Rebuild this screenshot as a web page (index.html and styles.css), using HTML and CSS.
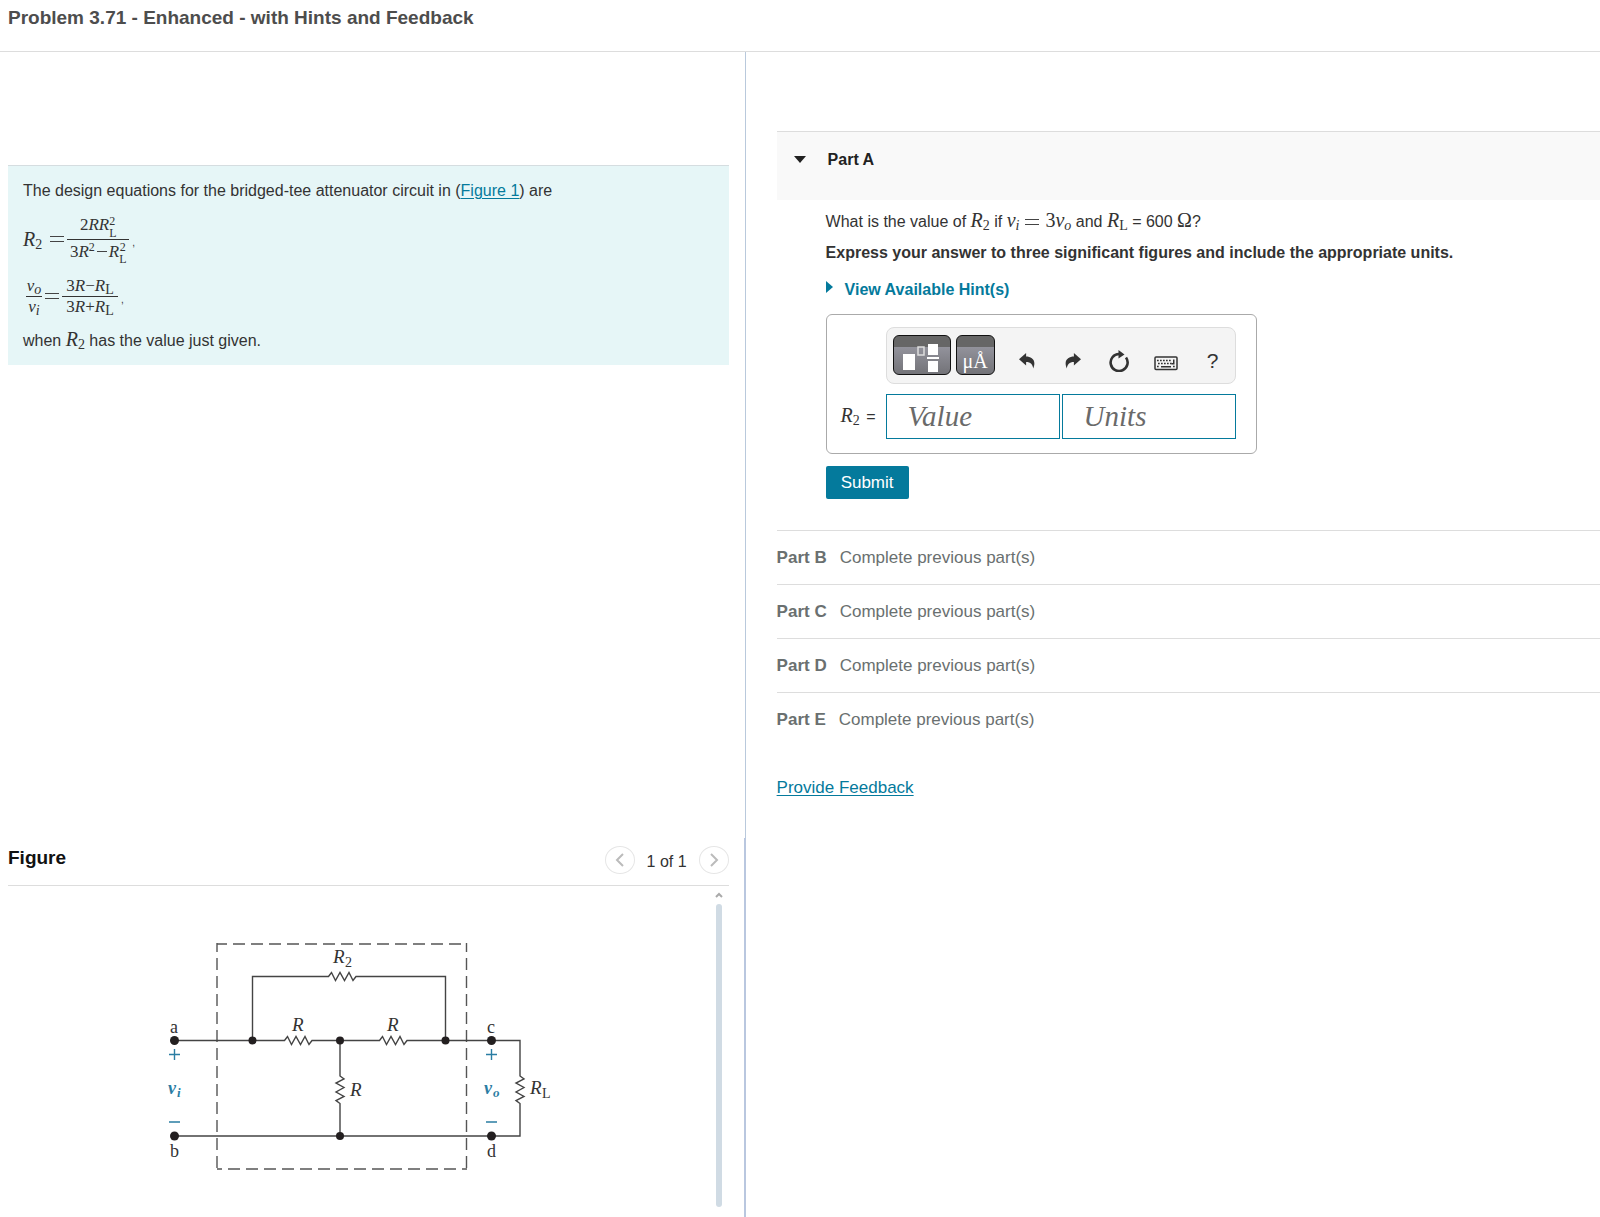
FILE: index.html
```html
<!DOCTYPE html>
<html lang="en">
<head>
<meta charset="utf-8">
<meta name="viewport" content="width=device-width, initial-scale=1">
<title>Problem 3.71</title>
<link rel="stylesheet" href="styles.css">
</head>
<body>
<header class="page-header">
  <h1 class="page-title">Problem 3.71 - Enhanced - with Hints and Feedback</h1>
</header>
<main class="columns">
  <div class="left">
    <section class="problem">
      <div class="problem-box">
        <p class="text">The design equations for the bridged-tee attenuator circuit in (<a href="#figure">Figure 1</a>) are</p>
        <div class="equation">
          <span class="math"><i>R</i><sub>2</sub></span>
          <span class="eq"></span>
          <span class="frac frac-tall">
            <span class="num">2<i>RR</i><span class="stack"><span>2</span><span>L</span></span></span>
            <span class="den">3<i>R</i><sup>2</sup><span class="minus"></span><i>R</i><span class="stack"><span>2</span><span>L</span></span></span>
          </span>
          <span class="comma">,</span>
        </div>
        <div class="equation equation-short">
          <span class="frac frac-small">
            <span class="num"><i>v<sub>o</sub></i></span>
            <span class="den"><i>v<sub>i</sub></i></span>
          </span>
          <span class="eq"></span>
          <span class="frac">
            <span class="num">3<i>R</i>−<i>R</i><sub>L</sub></span>
            <span class="den">3<i>R</i>+<i>R</i><sub>L</sub></span>
          </span>
          <span class="comma">,</span>
        </div>
        <p class="text">when <span class="math"><i>R</i><sub>2</sub></span> has the value just given.</p>
      </div>
    </section>
    <section class="figure" id="figure">
      <div class="figure-head">
        <h2 class="figure-title">Figure</h2>
        <div class="pager">
          <button class="round" type="button" aria-label="Previous figure"><svg width="10" height="14" viewBox="0 0 10 14"><path d="M8 1 2 7l6 6"/></svg></button>
          <span class="pager-text">1 of 1</span>
          <button class="round" type="button" aria-label="Next figure"><svg width="10" height="14" viewBox="0 0 10 14"><path d="m2 1 6 6-6 6"/></svg></button>
        </div>
      </div>
      <div class="figure-body">
        <div class="figure-canvas">
          <svg class="circuit" width="420" height="250" viewBox="148 930 420 250" role="img" aria-label="Bridged-tee attenuator circuit">
            <g class="dashes">
              <path d="M217 944H467" stroke-dasharray="12 6" stroke-dashoffset="2"/>
              <path d="M217 1169H467" stroke-dasharray="12 6" stroke-dashoffset="7"/>
              <path d="M217 943V1169" stroke-dasharray="12 6" stroke-dashoffset="3"/>
              <path d="M466.500 943V1169" stroke-dasharray="12 6" stroke-dashoffset="3"/>
            </g>
            <g class="wires">
              <path d="M252.500 1040V976.500H328.500l3-4 4 8 4.500-8 4.500 8 4.500-8 4 8 3-4H445.500V1040"/>
              <path d="M174 1040.500H284.500l3-4 4 8 4.500-8 4.500 8 4.500-8 4 8 3-4H379.500l3-4 4 8 4.500-8 4.500 8 4.500-8 4 8 3-4H520V1076l4 3-8 4 8 4.500-8 4.500 8 4.500-8 4 4 3V1136H174"/>
              <path d="M340 1040V1076l4 3-8 4 8 4.500-8 4.500 8 4.500-8 4 4 3V1136"/>
            </g>
            <g class="nodes">
              <circle cx="174.500" cy="1040.500" r="4.500"/><circle cx="252.500" cy="1040.500" r="4"/><circle cx="340" cy="1040.500" r="4"/><circle cx="445.500" cy="1040.500" r="4"/><circle cx="491.500" cy="1040.500" r="4.500"/>
              <circle cx="174.500" cy="1136" r="4.500"/><circle cx="340" cy="1136" r="4"/><circle cx="491.500" cy="1136" r="4.500"/>
            </g>
            <g class="signs">
              <path d="M169 1054.500h11M174.500 1049v11M486 1054.500h11M491.500 1049v11M169 1122h11M486 1122h11"/>
            </g>
            <g class="labels">
              <text x="170" y="1033">a</text><text x="170" y="1157">b</text>
              <text x="487" y="1033">c</text><text x="487" y="1157">d</text>
              <text class="it" x="333" y="963">R</text><text class="small" x="345" y="967">2</text>
              <text class="it" x="292" y="1031">R</text><text class="it" x="387" y="1031">R</text>
              <text class="it" x="350" y="1096">R</text>
              <text class="it" x="530" y="1094">R</text><text class="small" x="542" y="1098">L</text>
              <text class="volt" x="168" y="1094">v</text><text class="volt volt-sub" x="177" y="1097">i</text>
              <text class="volt" x="484" y="1094">v</text><text class="volt volt-sub" x="493" y="1097">o</text>
            </g>
          </svg>
        </div>
        <div class="scroll"><svg width="8" height="6" viewBox="0 0 8 6"><path d="M1 5 4 2l3 3"/></svg><span class="thumb"></span></div>
      </div>
    </section>
  </div>
  <div class="right">
    <section class="part-a">
      <div class="part-head">
        <svg width="12" height="7" viewBox="0 0 12 7"><path d="M0 0h12L6 7z"/></svg>
        <h2 class="part-title">Part A</h2>
      </div>
      <div class="part-body">
        <p class="text question">What is the value of <span class="math"><i>R</i><sub>2</sub></span> if <span class="math"><i>v<sub>i</sub></i></span><span class="eq"></span><span class="math">3<i>v<sub>o</sub></i></span> and <span class="math"><i>R</i><sub>L</sub></span> = 600 <span class="math">Ω</span>?</p>
        <p class="text instruction">Express your answer to three significant figures and include the appropriate units.</p>
        <a class="hints" href="#hints"><svg width="7" height="12" viewBox="0 0 7 12"><path d="M0 0l7 6-7 6z"/></svg><span>View Available Hint(s)</span></a>
        <form class="answer">
          <div class="toolbar">
            <button class="tool templates" type="button" aria-label="Templates"><svg width="42" height="32" viewBox="0 0 42 32"><path d="M2 13h12v16H2zM27 3h10v11H27zM27 20h10v11H27zM26 16h12v2H26z" fill="#fff"/><path d="M17 6h6v8h-6z" fill="none" stroke="#ddd" stroke-width="1.500"/></svg></button>
            <button class="tool symbols" type="button" aria-label="Symbols">μÅ</button>
            <button class="plain undo" type="button" aria-label="Undo"><svg width="16" height="18" viewBox="0 0 18 18"><path d="M8 0v4c6 0 12 4 8 13.500C15.500 13 13 10 8 10v4L0 7z"/></svg></button>
            <button class="plain redo" type="button" aria-label="Redo"><svg width="16" height="18" viewBox="0 0 18 18"><path d="M10 0v4c-6 0-12 4-8 13.500C2.500 13 5 10 10 10v4l8-7z"/></svg></button>
            <button class="plain" type="button" aria-label="Reset"><svg width="20" height="22" viewBox="0 0 20 22"><path d="M10 4a8.500 8.500 0 1 0 7 3.500" fill="none" stroke="#333" stroke-width="2.600"/><path d="M9.500 0l6 4.500-6 4z"/></svg></button>
            <button class="plain keyboard" type="button" aria-label="Keyboard shortcuts"><svg width="24" height="15" viewBox="0 0 24 15"><rect x="1" y="1" width="22" height="12.500" rx="1" fill="none" stroke="#333" stroke-width="1.500"/><path d="M3 4.500h15M4 7.500h14M3 10.500h2M19 10.500h2" fill="none" stroke="#333" stroke-width="1.500" stroke-dasharray="1.700 1.300"/><path d="M7 10h10v1.500H7zM19 3.500h1.500V8.500h-3V7h1.500z"/></svg></button>
            <button class="plain help" type="button" aria-label="Help">?</button>
          </div>
          <label class="answer-label" for="value"><span class="math"><i>R</i><sub>2</sub></span> =</label>
          <div class="fields">
            <input class="field" id="value" type="text" placeholder="Value">
            <input class="field" type="text" placeholder="Units" aria-label="Units">
          </div>
        </form>
        <button class="submit" type="button">Submit</button>
      </div>
    </section>
    <div class="locked"><b>Part B</b><span>Complete previous part(s)</span></div>
    <div class="locked"><b>Part C</b><span>Complete previous part(s)</span></div>
    <div class="locked"><b>Part D</b><span>Complete previous part(s)</span></div>
    <div class="locked"><b>Part E</b><span>Complete previous part(s)</span></div>
    <a class="feedback" href="#feedback">Provide Feedback</a>
  </div>
</main>
</body>
</html>
```
FILE: styles.css
```css
* { box-sizing: border-box; }

body {
  display: flex;
  flex-direction: column;
  min-height: 100vh;
  margin: 0;
  background: #fff;
  color: #333;
  font: 16px/24px "Liberation Sans", Arial, sans-serif;
}

h1, h2, p { margin: 0; }
a { color: #047a9c; text-underline-offset: 2px; }
button { padding: 0; font-family: inherit; cursor: pointer; }

.page-header { padding: 6px 8px 21px; border-bottom: 1px solid #ddd; }
.page-title { color: #4d4d4d; font-size: 19px; line-height: 24px; }

.columns { display: grid; grid-template-columns: minmax(560px, 46.6%) 1fr; flex: 1; }
.left { display: flex; flex-direction: column; }

.problem { flex: 1; padding: 113px 16px 0 8px; border-right: 1px solid #b9c9dc; }
.problem-box { padding: 13px 15px 12px; border-top: 1px solid #d5dde0; background: #e6f6f7; }

.math { font-family: "Liberation Serif", "Times New Roman", serif; font-size: 20px; line-height: 20px; }
.math sub, .frac sub { font-size: 14px; line-height: 0; }
.frac sup { font-size: 12px; line-height: 0; }
sub { vertical-align: -3px; }
sup { vertical-align: 6px; }

.eq { display: inline-block; width: 14px; height: 6px; border: solid #444; border-width: 1px 0; }
.equation { display: flex; align-items: center; gap: 3px; height: 60px; margin-top: 6px; }
.equation > .math { margin-right: 5px; }
.equation-short { height: 44px; margin: 5px 0 11px; }
.frac {
  display: grid;
  justify-items: center;
  min-width: 56px;
  font-family: "Liberation Serif", "Times New Roman", serif;
  font-size: 17px;
  line-height: 20px;
}
.frac .den { border-top: 1px solid #333; width: 100%; text-align: center; }
.frac-tall { min-width: 62px; line-height: 24px; }
.frac-small { min-width: 16px; margin-left: 3px; }
.stack { display: inline-grid; vertical-align: middle; font-size: 12px; line-height: 12px; }
.minus { display: inline-block; width: 10px; height: 1px; margin: 0 2px; background: #444; vertical-align: 5px; }
.comma { padding-top: 8px; font-size: 10px; }

.figure { padding: 0 15px 10px 8px; border-right: 2px solid #b9c7df; }
.figure-head { display: flex; justify-content: space-between; height: 48px; border-bottom: 1px solid #ddd; }
.figure-title { color: #111; font-size: 19px; line-height: 24px; padding-top: 8px; }
.pager { display: flex; align-items: center; gap: 12px; height: 44px; }
.pager-text { padding-top: 3px; }
.round { display: grid; place-items: center; width: 30px; height: 28px; border: 1px solid #e6e6e6; border-radius: 50%; background: #fff; }
.round path { fill: none; stroke: #bbb; stroke-width: 2; }
.figure-body { display: flex; }
.figure-canvas { display: flex; flex: 1; justify-content: center; padding-top: 44px; }
.circuit { display: block; }
.scroll { display: flex; flex-direction: column; align-items: center; gap: 6px; width: 20px; padding-top: 6px; height: 321px; }
.scroll path { fill: none; stroke: #aaa; stroke-width: 2; }
.thumb { flex: 1; width: 6px; border-radius: 3px; background: #d0dbe4; }

.dashes path, .wires path { fill: none; stroke: #555; stroke-width: 1.4; }
.wires path { stroke: #444; }
.nodes circle { fill: #231f20; }
.signs path { fill: none; stroke: #2a7da3; stroke-width: 1.4; }
.labels text { fill: #333; font: 18px "Liberation Serif", serif; }
.labels .it { font-size: 19px; font-style: italic; }
.labels .small { font-size: 14px; }
.labels .volt { fill: #2a7da3; font-weight: bold; font-style: italic; }
.labels .volt-sub { font-size: 13px; }

.right { padding: 79px 0 0 31px; }
.part-head { display: flex; align-items: flex-start; gap: 22px; height: 69px; padding: 16px 17px; border-top: 1px solid #ddd; background: #f9f9f9; }
.part-head svg { margin-top: 8px; fill: #222; }
.part-title { color: #222; font-size: 16px; line-height: 24px; }
.part-body { display: flex; flex-direction: column; align-items: flex-start; padding: 10px 16px 31px 49px; }
.question .eq { margin: 0 6px 2px; }
.instruction { margin-top: 7px; font-weight: bold; }
.hints { display: flex; gap: 12px; margin-top: 13px; font-weight: bold; text-decoration: none; }
.hints svg { margin-top: 3px; fill: #047a9c; }

.answer {
  display: grid;
  grid-template-columns: auto 350px;
  column-gap: 10px;
  row-gap: 10px;
  align-items: center;
  margin-top: 12px;
  padding: 12px 20px 14px 14px;
  border: 1px solid #aaa;
  border-radius: 6px;
}
.toolbar { grid-column: 2; display: flex; align-items: center; height: 57px; padding: 0 6px 2px; border: 1px solid #ddd; border-radius: 8px; background: #f4f4f4; }
.tool { display: grid; place-items: center; height: 40px; border: 1px solid #111; border-radius: 6px; background: linear-gradient(#666 0 28%, #92929b 30%, #737378); color: #fff; }
.templates { width: 58px; padding-top: 4px; }
.symbols { width: 39px; margin: 0 21px 0 5px; padding-top: 14px; font: 20px "Liberation Serif", serif; }
.plain { display: grid; place-items: center; width: 22px; height: 24px; margin-top: 12px; margin-right: 24px; border: 0; background: none; color: #333; font-size: 21px; }
.plain svg { fill: #333; }
.keyboard { width: 24px; padding-top: 6px; margin-right: 24px; }
.help { margin-right: 0; }
.answer-label { white-space: nowrap; }
.answer-label .math { margin-right: 2px; }
.fields { display: flex; gap: 2px; }
.field { flex: 1; min-width: 0; height: 45px; padding: 0 21px; border: 1px solid #047a9c; border-radius: 0; background: #fff; color: #333; font: italic 29px "Liberation Serif", serif; }
.field::placeholder { color: #6a6a6a; opacity: 1; }
.submit { margin-top: 12px; width: 83px; height: 33px; border: 0; border-radius: 2px; background: #047a9c; color: #fff; font-size: 17px; }

.locked { display: flex; gap: 13px; padding: 15px 0 14px; border-top: 1px solid #ddd; color: #6a7070; font-size: 17px; }
.feedback { display: inline-block; margin-top: 30px; font-size: 17px; }
```
